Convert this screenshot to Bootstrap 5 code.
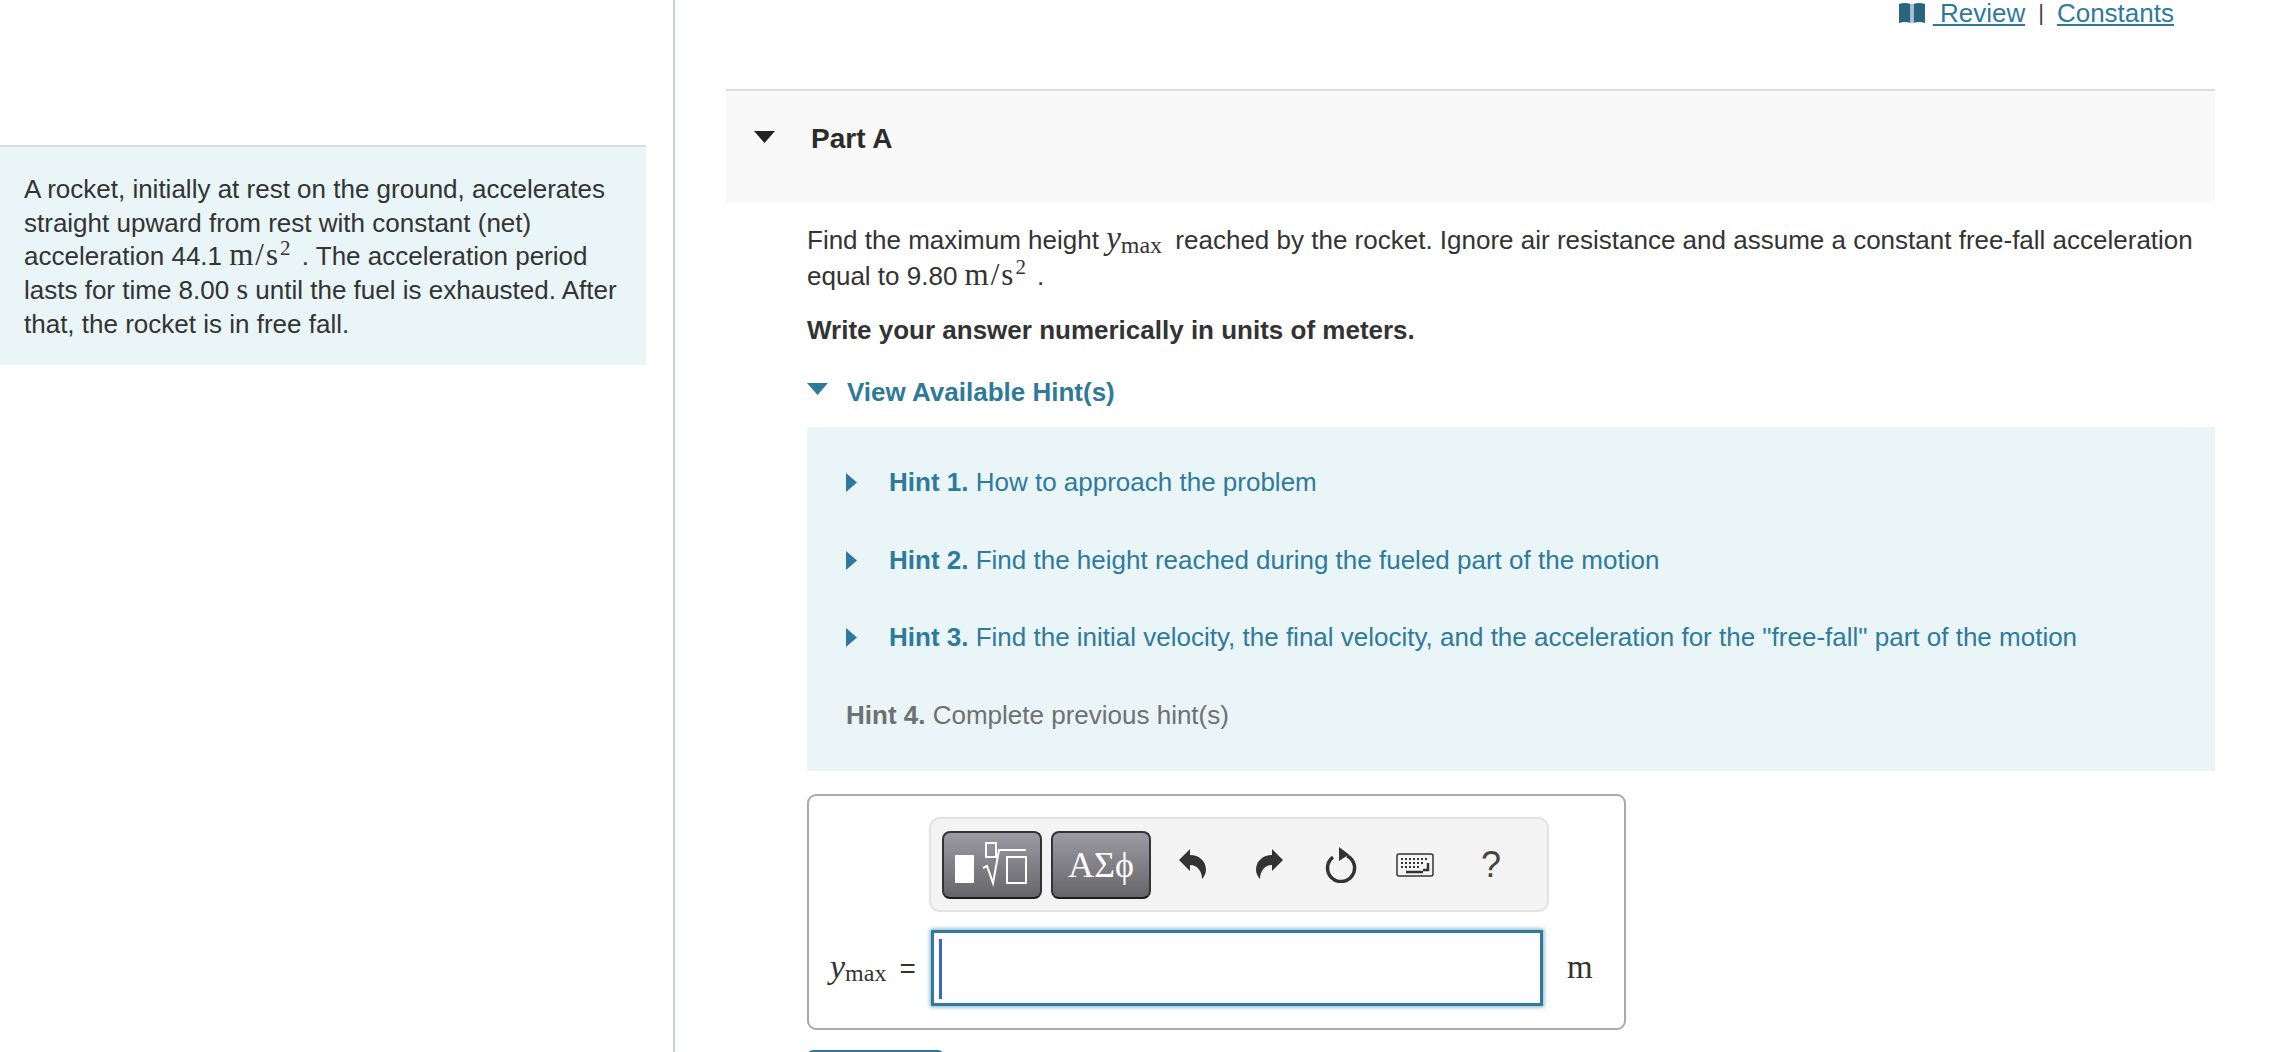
<!DOCTYPE html>
<html lang="en">
<head>
  <meta charset="UTF-8" />
  <title>Part A</title>
  <link href="https://cdn.jsdelivr.net/npm/bootstrap@5.3.3/dist/css/bootstrap.min.css" rel="stylesheet" />
  <style>
    body { font-family: "Liberation Sans", Arial, sans-serif; font-size: 26px; line-height: 35.5px; color: #333; background: #fff; overflow: hidden; }
    a { color: #2f7a9b; }
    .page-wrap { height: 1052px; overflow: hidden; }
    .intro-col { width: 675px; flex: none; padding-top: 145px; border-right: 2px solid #c3d2e0; }
    .intro-box { width: 646px; padding: 26px 24px 23px 24px; line-height: 33.7px; background: #e9f5f7; border-top: 2px solid #ddd; }
    .main-col { flex: 1 1 auto; min-width: 0; padding: 0 55px 0 51px; }
    .top-links { height: 89px; line-height: 26px; padding-right: 41px; }
    .top-links svg { margin: 3px 8px 0 0; }
    .top-sep { margin: 0 13px; font-size: 22px; color: #444; }
    .part-head { height: 114px; padding: 33px 0 0 28px; background: #f9f9f9; border-top: 2px solid #ddd; font-size: 28px; line-height: 30px; font-weight: 700; color: #2b2b2b; }
    .part-head svg { margin: 7px 36px 0 0; }
    .part-body { padding: 20px 0 0 81px; }
    .part-body p { margin: 0 0 19px; }
    .hint-toggle { margin-top: 26px; font-weight: 700; color: #2f7a9b; }
    .hint-toggle svg { margin-right: 19px; }
    .hint-panel { margin-top: 17px; padding: 38px 0 38px 39px; background: #e9f5f7; color: #2f7a9b; }
    .hint-panel svg { margin-right: 32px; }
    .hint-row { height: 35.5px; margin-bottom: 42px; }
    .hint-row:last-child { margin-bottom: 0; color: #6d7172; }
    .answer-box { width: 819px; margin-top: 23px; padding: 21px 0 22px; border: 2px solid #aaa; border-radius: 9px; }
    .tool-bar { width: 620px; height: 95px; margin-left: 120px; padding: 11px 11px; background: #f4f4f4; border: 2px solid #e3e3e3; border-radius: 11px; }
    .tool-btn { width: 100px; height: 68px; padding: 0; margin-right: 9px; border: 2px solid #333; border-bottom-color: #1c1c1c; border-radius: 8px; background: linear-gradient(#9c9aa3, #66666a); color: #fff; font-family: "Liberation Serif", serif; font-size: 36px; line-height: 60px; }
    .tool-ico { color: #333; fill: currentColor; }
    .tool-gap-a { margin-left: 19px; }
    .tool-gap-b { margin-left: 50px; }
    .tool-gap-c { margin-left: 42px; }
    .tool-gap-d { margin-left: 38px; }
    .tool-q { margin-left: 47px; font-size: 36px; line-height: 40px; color: #444; }
    .input-row { margin-top: 18px; height: 76px; }
    .math-lbl { width: 122px; padding: 0 0 0 21px; font-family: "Liberation Serif", serif; font-size: 28px; }
    .math-lbl i { font-size: 34px; }
    .math-lbl sub { font-size: 24px; bottom: -.1em; }
    .math-lbl b { margin-left: 13px; font-family: "Liberation Sans", sans-serif; font-weight: 400; }
    .math-input { width: 612px; height: 76px; padding: 6px 5px; border: 3px solid #2f7a9b; box-shadow: 0 0 4px 1px rgba(47, 122, 155, .6); background: #fff; }
    .math-caret { width: 3px; height: 60px; background: #3b63cf; }
    .unit-m { margin-left: 24px; font-family: "Liberation Serif", serif; font-size: 33px; }
    .mth { font-family: "Liberation Serif", serif; font-size: 30px; line-height: 0; }
    .mth-wide { margin-right: 4px; letter-spacing: 2px; font-size: 31px; }
    .mth-wide sup { font-size: 21px; letter-spacing: 0; }
    .var-y { margin-right: 6px; font-family: "Liberation Serif", serif; font-style: italic; font-size: 33px; line-height: 0; }
    .var-y sub { font-style: normal; font-size: 24px; bottom: -.15em; }
    .submit-btn { display: block; width: 137px; height: 50px; margin: 20px 0 0 0; background: #2f7a9b; border: 0; border-radius: 6px; }
  </style>
</head>
<body>
  <div class="page-wrap d-flex">
    <aside class="intro-col">
      <div class="intro-box">
        A rocket, initially at rest on the ground, accelerates straight upward from rest with constant (net) acceleration 44.1 <span class="mth mth-wide">m/s<sup>2</sup></span> . The acceleration period lasts for time 8.00 <span class="mth">s</span> until the fuel is exhausted. After that, the rocket is in free fall.
      </div>
    </aside>

    <main class="main-col">
      <div class="top-links d-flex justify-content-end align-items-start">
        <svg width="26" height="20" viewBox="0 0 26 20"><path fill="#2a6580" d="M0 1q6-2 11.500 0v19q-5-2-11.500 0zM26 1q-6-2-11.500 0v19q5-2 11.500 0z" /><path fill="#a9c3cf" d="M11.500 1h3v19h-3z" /></svg>
        <a href="#">&nbsp;Review</a><span class="top-sep">|</span><a href="#">Constants</a>
      </div>

      <section class="part-head d-flex align-items-start">
        <svg width="21" height="12" viewBox="0 0 21 12"><path fill="#222" d="M0 0h21L10.500 12z" /></svg>
        <span>Part A</span>
      </section>

      <div class="part-body">
        <p>Find the maximum height <span class="var-y">y<sub>max</sub></span> reached by the rocket. Ignore air resistance and assume a constant free-fall acceleration equal to 9.80 <span class="mth mth-wide">m/s<sup>2</sup></span> .</p>
        <p class="fw-bold mb-0">Write your answer numerically in units of meters.</p>

        <div class="hint-toggle d-flex align-items-start">
          <svg width="21" height="12" viewBox="0 0 21 12" class="mt-2"><path fill="#2f7a9b" d="M0 0h21L10.500 12z" /></svg>
          <span>View Available Hint(s)</span>
        </div>

        <div class="hint-panel">
          <div class="hint-row d-flex align-items-center">
            <svg width="11" height="19" viewBox="0 0 11 19"><path fill="#2f7a9b" d="M0 0l11 9.500L0 19z" /></svg>
            <span><b>Hint 1.</b> How to approach the problem</span>
          </div>
          <div class="hint-row d-flex align-items-center">
            <svg width="11" height="19" viewBox="0 0 11 19"><path fill="#2f7a9b" d="M0 0l11 9.500L0 19z" /></svg>
            <span><b>Hint 2.</b> Find the height reached during the fueled part of the motion</span>
          </div>
          <div class="hint-row d-flex align-items-center">
            <svg width="11" height="19" viewBox="0 0 11 19"><path fill="#2f7a9b" d="M0 0l11 9.500L0 19z" /></svg>
            <span><b>Hint 3.</b> Find the initial velocity, the final velocity, and the acceleration for the "free-fall" part of the motion</span>
          </div>
          <div class="hint-row"><b>Hint 4.</b> Complete previous hint(s)</div>
        </div>

        <div class="answer-box">
          <div class="tool-bar d-flex align-items-center">
            <button type="button" class="btn tool-btn">
              <svg width="76" height="46" viewBox="0 0 76 46" class="d-block mx-auto" fill="none" stroke="#fff" stroke-width="2">
                <rect x="1" y="13" width="19" height="28" fill="#fff" stroke="none" />
                <rect x="32" y="1" width="10" height="14" />
                <path d="M29 26l4-2 6 17 6-33h27" />
                <rect x="53" y="15" width="19" height="26" />
              </svg>
            </button>
            <button type="button" class="btn tool-btn">ΑΣϕ</button>

            <svg class="tool-ico tool-gap-a" width="27" height="31" viewBox="0 0 27 31"><path d="M0 11L11 0v6c9 0 16 6 16 15 0 3-2 7-4 9 0-7-4-14-12-14v6z" /></svg>
            <svg class="tool-ico tool-gap-b" width="27" height="31" viewBox="0 0 27 31"><path d="M27 11L16 0v6C7 6 0 12 0 21c0 3 2 7 4 9 0-7 4-14 12-14v6z" /></svg>
            <svg class="tool-gap-c" width="33" height="36" viewBox="0 0 33 36" fill="none" stroke="#333" stroke-width="3.500"><path d="M8 10.200A13.500 13.500 0 1 0 22 8.900" /><path fill="#333" stroke="none" d="M14 0l10 7.500L14 14z" /></svg>
            <svg class="tool-gap-d" width="38" height="24" viewBox="0 0 38 24"><rect x="1" y="1" width="36" height="22" rx="2" fill="none" stroke="#333" stroke-width="1.500" /><path stroke="#333" stroke-width="2" stroke-dasharray="2 2" d="M5 6h28M5 10h24M5 14h20" /><path stroke="#333" stroke-width="2.500" fill="none" d="M10 19h17M32 10v7h-5" /></svg>
            <span class="tool-q">?</span>
          </div>

          <div class="input-row d-flex align-items-center">
            <div class="math-lbl"><i>y</i><sub>max</sub><b>=</b></div>
            <div class="math-input"><div class="math-caret"></div></div>
            <span class="unit-m">m</span>
          </div>
        </div>

        <button type="button" class="btn submit-btn" aria-label="Submit"></button>
      </div>
    </main>
  </div>
  <script src="https://cdn.jsdelivr.net/npm/bootstrap@5.3.3/dist/js/bootstrap.bundle.min.js"></script>
</body>
</html>
